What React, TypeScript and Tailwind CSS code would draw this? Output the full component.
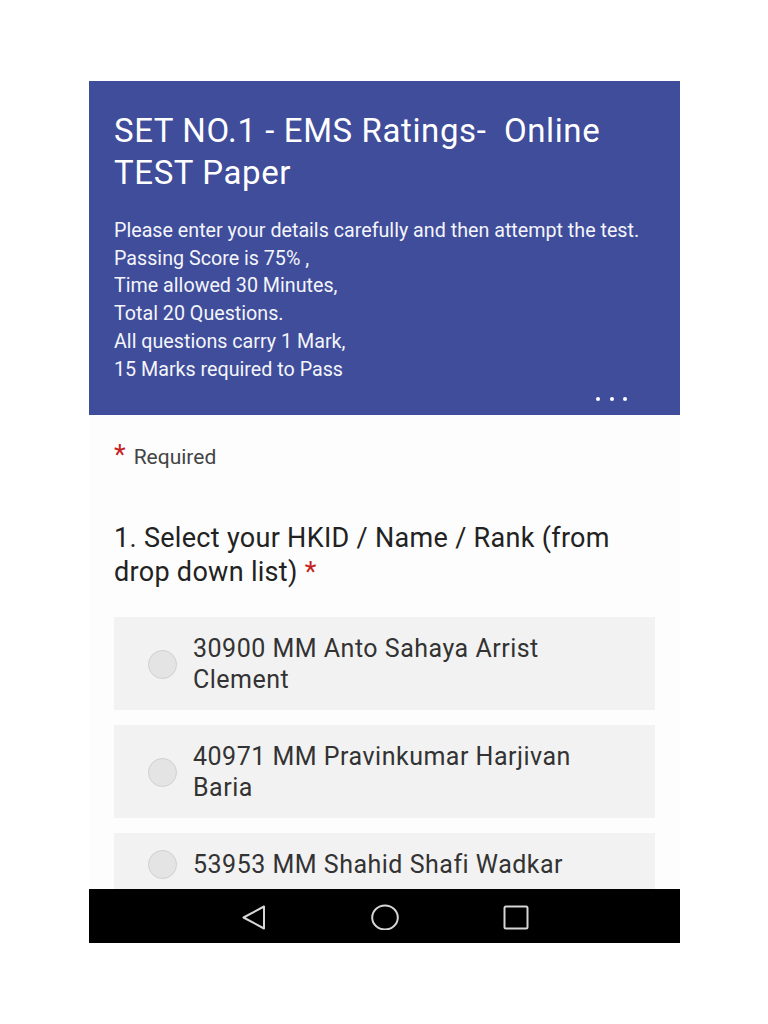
import React from "react";

const options: string[][] = [
  ["30900 MM Anto Sahaya Arrist", "Clement"],
  ["40971 MM Pravinkumar Harjivan", "Baria"],
  ["53953 MM Shahid Shafi Wadkar"],
];

function Radio() {
  return (
    <div className="w-[29px] h-[29px] shrink-0 rounded-full bg-[#e4e4e4] border border-[#d0d0d0]" />
  );
}

export default function App() {
  return (
    <div className="w-[768px] h-[1024px] bg-white pt-[81px] pl-[89px] font-['Roboto','Noto_Sans',sans-serif]">
      <div className="w-[591px] h-[862px] flex flex-col overflow-hidden">
        <header className="h-[334px] shrink-0 bg-[#3f4d9b] text-white pt-[29px] px-[25px] flex flex-col">
          <h1 className="text-[33px] leading-[42px] tracking-[0.6px] font-normal whitespace-pre">
            {"SET NO.1 - EMS Ratings-  Online\nTEST Paper"}
          </h1>
          <div className="mt-[23px] text-[19.7px] leading-[27.7px] text-[#f4f5fa]">
            <div>Please enter your details carefully and then attempt the test.</div>
            <div>Passing Score is 75% ,</div>
            <div>Time allowed 30 Minutes,</div>
            <div>Total 20 Questions.</div>
            <div>All questions carry 1 Mark,</div>
            <div>15 Marks required to Pass</div>
          </div>
          <div className="mt-[14px] flex justify-end gap-[9.5px] pr-[28px]">
            <span className="w-[4px] h-[4px] rounded-full bg-white" />
            <span className="w-[4px] h-[4px] rounded-full bg-white" />
            <span className="w-[4px] h-[4px] rounded-full bg-white" />
          </div>
        </header>

        <main className="flex-1 min-h-0 overflow-hidden bg-[#fdfdfd] pt-[28px] pl-[25px] pr-[25px]">
          <div className="flex items-baseline text-[21px] leading-[24px] text-[#444]">
            <span className="text-[#c5221f] text-[27px] mr-[8px]">*</span>
            <span>Required</span>
          </div>

          <div className="mt-[52px] text-[27px] leading-[34px] tracking-[0.3px] text-[#222]">
            1. Select your HKID / Name / Rank (from
            <br />
            drop down list) <span className="text-[#c5221f]">*</span>
          </div>

          <div className="mt-[28px] flex flex-col gap-[15px]">
            {options.map((lines, i) => (
              <div
                key={i}
                className="bg-[#f2f2f2] flex items-center pl-[34px] pr-[16px] pt-[16px] pb-[15px]"
              >
                <Radio />
                <div className="ml-[16px] text-[25px] leading-[31px] tracking-[0.5px] text-[#333]">
                  {lines.map((l, j) => (
                    <div key={j}>{l}</div>
                  ))}
                </div>
              </div>
            ))}
          </div>
        </main>

        <nav className="h-[54px] shrink-0 bg-black flex items-center justify-center gap-[103px]">
          <svg width="28" height="28" viewBox="0 0 28 28" fill="none" stroke="#d6d6d6" strokeWidth="2" strokeLinejoin="round">
            <path d="M3.5 15.5 L24 4.5 L24 26.5 Z" />
          </svg>
          <svg width="28" height="28" viewBox="0 0 28 28" fill="none" stroke="#d6d6d6" strokeWidth="2">
            <ellipse cx="14" cy="15.5" rx="12.8" ry="12" />
          </svg>
          <svg width="28" height="28" viewBox="0 0 28 28" fill="none" stroke="#d6d6d6" strokeWidth="2">
            <rect x="2.5" y="4.5" width="23" height="22" rx="1.5" />
          </svg>
        </nav>
      </div>
    </div>
  );
}
